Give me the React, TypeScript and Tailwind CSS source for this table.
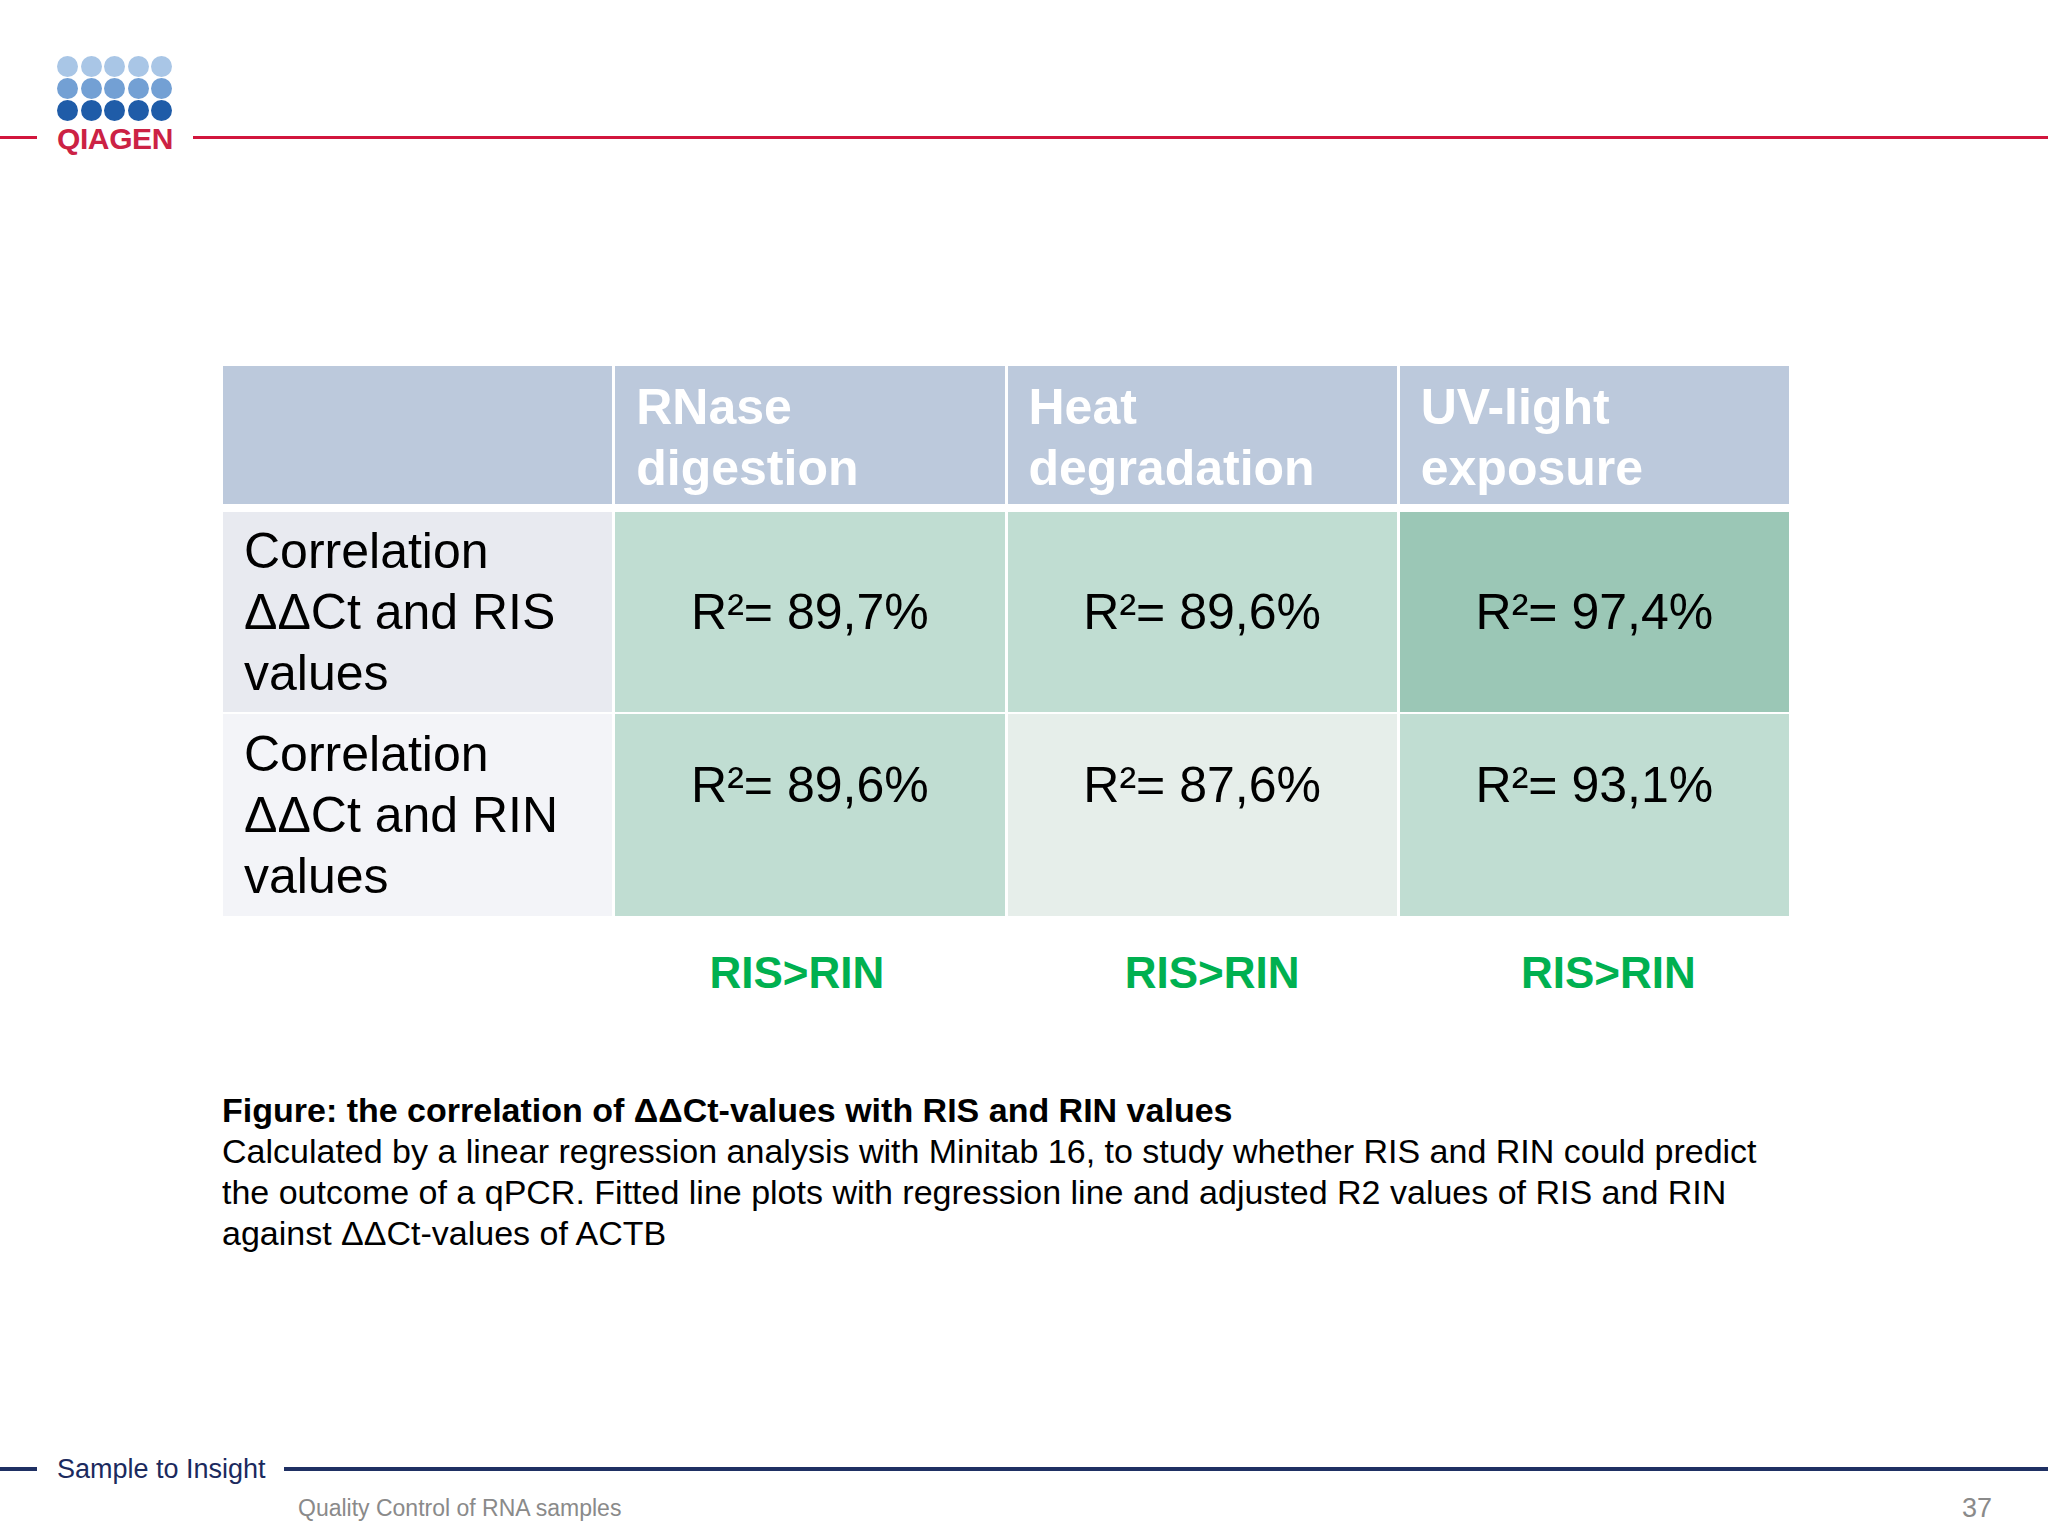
import React from "react";

const dotRows = [
  "bg-[#a9c6e6]",
  "bg-[#73a0d4]",
  "bg-[#1f5ca8]",
];

function Logo() {
  return (
    <div className="flex flex-col">
      <div className="grid grid-cols-5 gap-x-[2.5px] gap-y-[1px] w-[115px]">
        {dotRows.map((c, r) =>
          [0, 1, 2, 3, 4].map((i) => (
            <div key={`${r}-${i}`} className={`w-[21px] h-[21px] rounded-full ${c}`} />
          ))
        )}
      </div>
      <div className="mt-[3px] text-[30px] leading-[30px] font-bold tracking-[-0.4px] text-[#cc2244]">
        QIAGEN
      </div>
    </div>
  );
}

const headCell = "bg-[#bcc9dc] text-white font-bold text-[50px] leading-[61px] pl-[21px] pt-[11px] h-[138px]";
const labelText = "text-[50px] leading-[61px] text-black pl-[21px] flex items-center";
const valueText = "text-[50px] leading-[61px] text-black flex justify-center";

export default function App() {
  return (
    <div className="w-[2048px] h-[1536px] bg-white flex flex-col overflow-hidden font-['Liberation_Sans',Arial,sans-serif]">
      {/* Header */}
      <div className="flex h-[160px] shrink-0">
        <div className="w-[37px] pt-[136px]">
          <div className="h-[3px] bg-[#d2163d]" />
        </div>
        <div className="w-[156px] pl-[20px] pt-[56px]">
          <Logo />
        </div>
        <div className="flex-1 pt-[136px]">
          <div className="h-[3px] bg-[#d2163d]" />
        </div>
      </div>

      {/* Table */}
      <div className="ml-[223px] mt-[206px] w-[1566px] flex flex-col">
        <div className="grid grid-cols-4 gap-x-[3px]">
          <div className={headCell} />
          <div className={headCell}>RNase<br />digestion</div>
          <div className={headCell}>Heat<br />degradation</div>
          <div className={headCell}>UV-light<br />exposure</div>
        </div>
        <div className="grid grid-cols-4 gap-x-[3px] mt-[8px] h-[200px]">
          <div className={`${labelText} bg-[#e8eaf0]`}>
            <div>Correlation<br />ΔΔCt and RIS<br />values</div>
          </div>
          <div className={`${valueText} items-center bg-[#c0ddd2]`}>R²= 89,7%</div>
          <div className={`${valueText} items-center bg-[#c0ddd2]`}>R²= 89,6%</div>
          <div className={`${valueText} items-center bg-[#9bc7b6]`}>R²= 97,4%</div>
        </div>
        <div className="grid grid-cols-4 gap-x-[3px] mt-[2px] h-[202px]">
          <div className={`${labelText} bg-[#f3f4f8]`}>
            <div>Correlation<br />ΔΔCt and RIN<br />values</div>
          </div>
          <div className={`${valueText} items-start pt-[41px] bg-[#c0ddd2]`}>R²= 89,6%</div>
          <div className={`${valueText} items-start pt-[41px] bg-[#e6eeea]`}>R²= 87,6%</div>
          <div className={`${valueText} items-start pt-[41px] bg-[#c0ddd2]`}>R²= 93,1%</div>
        </div>
        <div className="grid grid-cols-4 gap-x-[3px] mt-[32px] text-[44px] leading-[50px] font-bold text-[#00b050]">
          <div />
          <div className="text-center pr-[26px]">RIS&gt;RIN</div>
          <div className="text-center pl-[20px]">RIS&gt;RIN</div>
          <div className="text-center pl-[28px]">RIS&gt;RIN</div>
        </div>
      </div>

      {/* Caption */}
      <div className="ml-[222px] mt-[92px] text-[34px] leading-[41px] text-black">
        <div className="font-bold">Figure: the correlation of ΔΔCt-values with RIS and RIN values</div>
        <div>Calculated by a linear regression analysis with Minitab 16, to study whether RIS and RIN could predict</div>
        <div>the outcome of a qPCR. Fitted line plots with regression line and adjusted R2 values of RIS and RIN</div>
        <div>against ΔΔCt-values of ACTB</div>
      </div>

      {/* Footer */}
      <div className="mt-auto flex flex-col pb-[4px]">
        <div className="flex items-center h-[30px]">
          <div className="w-[37px] h-[4px] bg-[#1f3063]" />
          <div className="pl-[20px] pr-[18px] text-[27px] leading-[30px] text-[#1b2a5e] whitespace-nowrap">
            Sample to Insight
          </div>
          <div className="flex-1 h-[4px] bg-[#1f3063]" />
        </div>
        <div className="flex items-center h-[48px] pl-[298px] pr-[56px] text-[#8a8a8a]">
          <div className="text-[23px]">Quality Control of RNA samples</div>
          <div className="ml-auto text-[27px]">37</div>
        </div>
      </div>
    </div>
  );
}
